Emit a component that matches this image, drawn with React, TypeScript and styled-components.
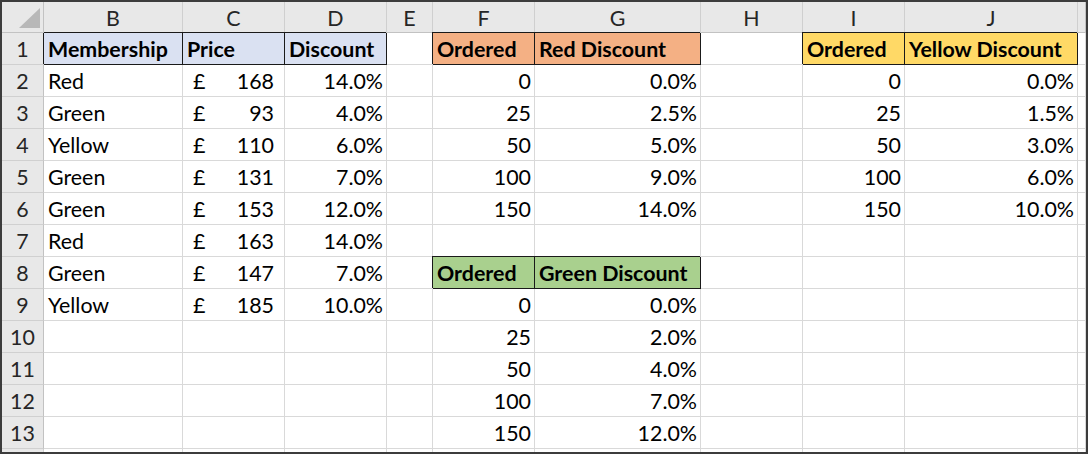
import React from "react";
import styled, { createGlobalStyle, css } from "styled-components";

const Global = createGlobalStyle`
  html, body { margin: 0; padding: 0; background: #ffffff; }
  #root { width: 1088px; height: 454px; }
`;

const FONT = `"Lato", "Carlito", "Noto Sans", sans-serif`;

const COLS = [42, 139, 102, 102, 46, 102, 166, 102, 102, 173, 8];
const LETTERS = ["", "B", "C", "D", "E", "F", "G", "H", "I", "J", ""];

type Fill = "blue" | "orange" | "green" | "yellow";
const FILLS: Record<Fill, string> = {
  blue: "#dae1f2",
  orange: "#f4b084",
  green: "#a9d08e",
  yellow: "#ffd966",
};

type CellData =
  | null
  | { k: "head"; t: string; fill: Fill }
  | { k: "text"; t: string }
  | { k: "num"; t: string }
  | { k: "acct"; t: string };

const Sheet = styled.div`
  box-sizing: border-box;
  width: 1088px;
  height: 454px;
  border: 2px solid #3c3c3c;
  display: grid;
  grid-template-columns: ${COLS.map((c) => `${c}px`).join(" ")};
  grid-template-rows: 31px repeat(13, 32px) 3px;
  overflow: hidden;
  font-family: ${FONT};
  font-size: 21.4px;
  color: #000;
  background: #fff;
`;

const HeaderBase = css`
  box-sizing: border-box;
  background: #e8e8e8;
  color: #262626;
  display: flex;
  align-items: flex-end;
  justify-content: center;
  line-height: 1;
  overflow: hidden;
`;

const Corner = styled.div`
  ${HeaderBase};
  position: relative;
  border-right: 1px solid #c2c2c2;
  border-bottom: 1px solid #c2c2c2;
`;

const CornerTriangle = styled.div`
  position: absolute;
  right: 3px;
  bottom: 4px;
  width: 0;
  height: 0;
  border-left: 21px solid transparent;
  border-bottom: 20px solid #b8b8b8;
`;

const ColHead = styled.div<{ $last?: boolean }>`
  ${HeaderBase};
  padding-bottom: 3px;
  border-right: 1px solid ${(p) => (p.$last ? "#c2c2c2" : "#cfcfcf")};
  border-bottom: 1px solid #c2c2c2;
`;

const RowHead = styled.div`
  ${HeaderBase};
  padding-bottom: 4px;
  border-right: 1px solid #c2c2c2;
  border-bottom: 1px solid #d0d0d0;
`;

const Cell = styled.div<{
  $align?: "left" | "right";
  $fill?: Fill;
  $bold?: boolean;
  $pad?: number;
}>`
  box-sizing: border-box;
  display: flex;
  align-items: flex-end;
  justify-content: ${(p) => (p.$align === "right" ? "flex-end" : "flex-start")};
  padding: 0 ${(p) => (p.$align === "right" ? p.$pad ?? 3 : 0)}px 4px
    ${(p) => (p.$align === "right" ? 0 : p.$pad ?? 4)}px;
  line-height: 1;
  white-space: nowrap;
  overflow: visible;
  font-weight: ${(p) => (p.$bold ? 700 : 400)};
  background: ${(p) => (p.$fill ? FILLS[p.$fill] : "#ffffff")};
  border-right: 1px solid ${(p) => (p.$fill ? "#1a1a1a" : "#d9d9d9")};
  border-bottom: 1px solid ${(p) => (p.$fill ? "#1a1a1a" : "#d9d9d9")};
  ${(p) => p.$fill && css`box-shadow: -1px -1px 0 0 #1a1a1a;`}
`;

const AcctCell = styled(Cell)`
  justify-content: space-between;
  padding-left: 10px;
  padding-right: 10px;
`;

const Edge = styled.div`
  box-sizing: border-box;
  background: #fff;
  border-right: 1px solid #d9d9d9;
`;

const EdgeHead = styled.div`
  background: #e8e8e8;
  border-right: 1px solid #d0d0d0;
`;

const Blank = styled.div`
  box-sizing: border-box;
  background: #fff;
  border-right: 1px solid #d9d9d9;
  border-bottom: 1px solid #d9d9d9;
`;

const members: [string, string, string][] = [
  ["Red", "168", "14.0%"],
  ["Green", "93", "4.0%"],
  ["Yellow", "110", "6.0%"],
  ["Green", "131", "7.0%"],
  ["Green", "153", "12.0%"],
  ["Red", "163", "14.0%"],
  ["Green", "147", "7.0%"],
  ["Yellow", "185", "10.0%"],
];
const red: [string, string][] = [
  ["0", "0.0%"],
  ["25", "2.5%"],
  ["50", "5.0%"],
  ["100", "9.0%"],
  ["150", "14.0%"],
];
const yellow: [string, string][] = [
  ["0", "0.0%"],
  ["25", "1.5%"],
  ["50", "3.0%"],
  ["100", "6.0%"],
  ["150", "10.0%"],
];
const green: [string, string][] = [
  ["0", "0.0%"],
  ["25", "2.0%"],
  ["50", "4.0%"],
  ["100", "7.0%"],
  ["150", "12.0%"],
];

function buildRows(): CellData[][] {
  const rows: CellData[][] = [];
  for (let r = 1; r <= 13; r++) {
    const row: CellData[] = Array(9).fill(null); // B..J
    if (r === 1) {
      row[0] = { k: "head", t: "Membership", fill: "blue" };
      row[1] = { k: "head", t: "Price", fill: "blue" };
      row[2] = { k: "head", t: "Discount", fill: "blue" };
      row[4] = { k: "head", t: "Ordered", fill: "orange" };
      row[5] = { k: "head", t: "Red Discount", fill: "orange" };
      row[7] = { k: "head", t: "Ordered", fill: "yellow" };
      row[8] = { k: "head", t: "Yellow Discount", fill: "yellow" };
    }
    if (r >= 2 && r <= 9) {
      const m = members[r - 2];
      row[0] = { k: "text", t: m[0] };
      row[1] = { k: "acct", t: m[1] };
      row[2] = { k: "num", t: m[2] };
    }
    if (r >= 2 && r <= 6) {
      row[4] = { k: "num", t: red[r - 2][0] };
      row[5] = { k: "num", t: red[r - 2][1] };
      row[7] = { k: "num", t: yellow[r - 2][0] };
      row[8] = { k: "num", t: yellow[r - 2][1] };
    }
    if (r === 8) {
      row[4] = { k: "head", t: "Ordered", fill: "green" };
      row[5] = { k: "head", t: "Green Discount", fill: "green" };
    }
    if (r >= 9) {
      row[4] = { k: "num", t: green[r - 9][0] };
      row[5] = { k: "num", t: green[r - 9][1] };
    }
    rows.push(row);
  }
  return rows;
}

function renderCell(c: CellData, key: string) {
  if (!c) return <Blank key={key} />;
  switch (c.k) {
    case "head":
      return (
        <Cell key={key} $fill={c.fill} $bold>
          {c.t}
        </Cell>
      );
    case "text":
      return <Cell key={key}>{c.t}</Cell>;
    case "num":
      return (
        <Cell key={key} $align="right">
          {c.t}
        </Cell>
      );
    case "acct":
      return (
        <AcctCell key={key}>
          <span>£</span>
          <span>{c.t}</span>
        </AcctCell>
      );
  }
}

export default function App() {
  const rows = buildRows();
  return (
    <>
      <Global />
      <Sheet>
        <Corner>
          <CornerTriangle />
        </Corner>
        {LETTERS.slice(1).map((l, i) => (
          <ColHead key={`h${i}`} $last={i === LETTERS.length - 2}>
            {l}
          </ColHead>
        ))}
        {rows.map((row, ri) => (
          <React.Fragment key={`r${ri}`}>
            <RowHead>{ri + 1}</RowHead>
            {row.map((c, ci) => renderCell(c, `c${ri}-${ci}`))}
            <Blank />
          </React.Fragment>
        ))}
        <EdgeHead />
        {COLS.slice(1).map((_, i) => (
          <Edge key={`e${i}`} />
        ))}
      </Sheet>
    </>
  );
}
